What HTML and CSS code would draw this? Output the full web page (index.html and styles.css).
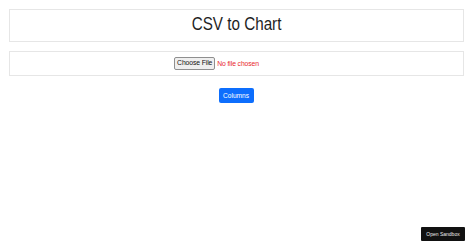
FILE: index.html
```html
<!DOCTYPE html>
<html>
<head>
<meta charset="utf-8">
<link rel="stylesheet" href="styles.css">
</head>
<body>
<div class="page">
  <div class="card title-card"><h1 class="title">CSV to Chart</h1></div>
  <div class="card file-card">
    <div class="file">
      <span class="file-btn">Choose File</span>
      <span class="file-none">No file chosen</span>
    </div>
  </div>
  <div class="actions"><button class="btn-primary">Columns</button></div>
</div>
<div class="sandbox">Open Sandbox</div>
</body>
</html>
```
FILE: styles.css
```css
html, body { margin: 0; padding: 0; background: #fff; }
body { font-family: "Liberation Sans", Arial, sans-serif; color: #212529; width: 474px; height: 248px; position: relative; overflow: hidden; }
.page { padding: 9px 10px 0 9px; display: flex; flex-direction: column; }
.card { border: 1px solid #e6e6e6; display: flex; justify-content: center; align-items: center; }
.title-card { height: 31px; }
.title { margin: 0 0 1px 1px; font-weight: 400; font-size: 17.5px; line-height: 1; color: #1e1e1e; transform: scaleX(0.87); }
.file-card { margin-top: 9px; height: 23px; }
.file { display: flex; align-items: center; gap: 2px; margin-right: 40px; }
.file-btn { font-size: 6.8px; color: #111; background: #efefef; border: 1px solid #8f8f8f; border-radius: 2px; padding: 2px 2px; line-height: 6.8px; letter-spacing: -0.1px; }
.file-none { font-size: 6.8px; color: #e8262e; letter-spacing: -0.1px; }
.actions { display: flex; justify-content: center; margin-top: 12px; padding-right: 1px; }
.btn-primary { font-family: inherit; font-size: 6.6px; color: #fff; background: #0d6efd; border: none; border-radius: 2px; width: 35px; height: 15px; padding: 0; }
.sandbox { position: absolute; left: 421px; top: 227px; width: 44px; height: 14px; background: #111; color: #eee; font-size: 5px; display: flex; align-items: center; justify-content: center; border-radius: 1px; }
```
